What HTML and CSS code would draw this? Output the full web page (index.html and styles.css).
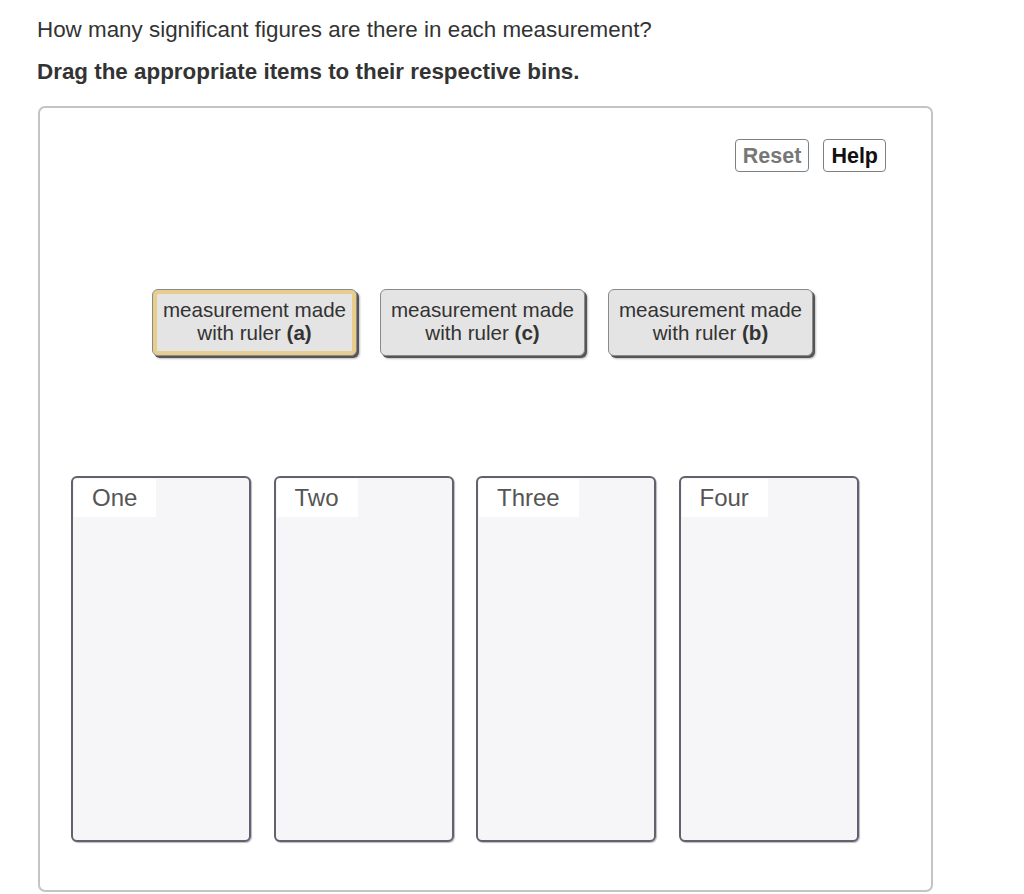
FILE: index.html
```html
<!DOCTYPE html>
<html lang="en">

<head>
  <meta charset="UTF-8" />
  <meta name="viewport" content="width=device-width, initial-scale=1.0" />
  <title>Significant figures</title>
  <link rel="stylesheet" href="styles.css">
</head>

<body>

  <p class="pregunta">How many significant figures are there in each measurement?</p>
  <p class="instruccion">Drag the appropriate items to their respective bins.</p>

  <div class="panel">
    <div class="botones">
      <button class="btn btn-reset">Reset</button>
      <button class="btn">Help</button>
    </div>

    <div class="fichas">
      <div class="ficha activa">measurement made<br>with ruler <b>(a)</b></div>
      <div class="ficha">measurement made<br>with ruler <b>(c)</b></div>
      <div class="ficha">measurement made<br>with ruler <b>(b)</b></div>
    </div>

    <div class="cajas">
      <div class="caja"><span class="etiqueta">One</span></div>
      <div class="caja"><span class="etiqueta">Two</span></div>
      <div class="caja"><span class="etiqueta">Three</span></div>
      <div class="caja"><span class="etiqueta">Four</span></div>
    </div>
  </div>

</body>

</html>
```

FILE: styles.css
```css
body {
  font-family: "Liberation Sans", Arial, sans-serif;
  margin: 0;
  padding: 17px 0 0 37px;
  background: #ffffff;
  color: #333333;
}

.pregunta {
  font-size: 22.4px;
  margin: 0;
  line-height: 26px;
}

.instruccion {
  font-size: 22.4px;
  font-weight: bold;
  margin: 16px 0 0;
  line-height: 26px;
}

.panel {
  box-sizing: border-box;
  width: 895px;
  height: 786px;
  margin: 21px 0 0 1px;
  border: 2px solid #c4c4c4;
  border-radius: 7px;
  padding: 31px 45px 0 31px;
}

.botones {
  display: flex;
  justify-content: flex-end;
  gap: 14px;
}

.btn {
  font-family: inherit;
  font-size: 21.5px;
  font-weight: bold;
  color: #111111;
  background: #ffffff;
  border: 1.5px solid #7a8288;
  border-radius: 4px;
  padding: 0 7px;
  height: 33px;
  line-height: 28px;
}

.btn-reset {
  color: #777777;
}

/* Fichas arrastrables */
.fichas {
  display: flex;
  gap: 23px;
  margin: 117px 0 0 81px;
}

.ficha {
  box-sizing: border-box;
  width: 205px;
  height: 67px;
  background: #e4e4e4;
  border: 1.5px solid #8a8a8a;
  border-radius: 6px;
  box-shadow: 2px 2px 0 #555555, 3px 3px 2px rgba(0, 0, 0, 0.25);
  font-size: 20.6px;
  line-height: 23px;
  text-align: center;
  color: #333333;
  padding-top: 8px;
}

.ficha.activa {
  box-shadow: inset 0 0 0 4px #e8cd8c, 2px 2px 0 #555555, 3px 3px 2px rgba(0, 0, 0, 0.25);
}

/* Cajas de destino */
.cajas {
  display: flex;
  gap: 22.5px;
  margin-top: 120px;
}

.caja {
  box-sizing: border-box;
  width: 180px;
  height: 366px;
  background: #f6f6f8;
  border: 2px solid #62626c;
  border-radius: 6px;
  box-shadow: 1px 1px 1px rgba(60, 60, 100, 0.35);
  padding: 1px 0 0 1px;
}

.etiqueta {
  display: inline-block;
  background: #ffffff;
  font-size: 24px;
  line-height: 38px;
  color: #555555;
  padding: 0 19px 0 18px;
  min-width: 44px;
}
```
